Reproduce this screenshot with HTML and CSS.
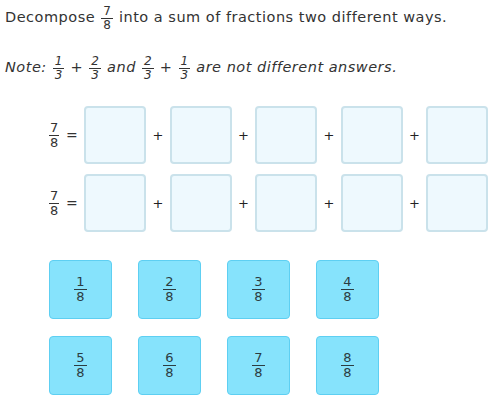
FILE: index.html
```html
<!DOCTYPE html>
<html>
<head>
<meta charset="utf-8">
<link rel="stylesheet" href="styles.css">
</head>
<body>
<div class="page">
  <p class="prompt">Decompose <span class="frac"><span class="num">7</span><span class="den">8</span></span> into a sum of fractions two different ways.</p>
  <p class="note"><em>Note: <span class="frac"><span class="num">1</span><span class="den">3</span></span> + <span class="frac"><span class="num">2</span><span class="den">3</span></span> and <span class="frac"><span class="num">2</span><span class="den">3</span></span> + <span class="frac"><span class="num">1</span><span class="den">3</span></span> are not different answers.</em></p>

  <div class="equations">
    <div class="eq-row">
      <span class="frac lhs"><span class="num">7</span><span class="den">8</span></span>
      <span class="eq">=</span>
      <div class="slot"></div><span class="plus">+</span>
      <div class="slot"></div><span class="plus">+</span>
      <div class="slot"></div><span class="plus">+</span>
      <div class="slot"></div><span class="plus">+</span>
      <div class="slot"></div>
    </div>
    <div class="eq-row">
      <span class="frac lhs"><span class="num">7</span><span class="den">8</span></span>
      <span class="eq">=</span>
      <div class="slot"></div><span class="plus">+</span>
      <div class="slot"></div><span class="plus">+</span>
      <div class="slot"></div><span class="plus">+</span>
      <div class="slot"></div><span class="plus">+</span>
      <div class="slot"></div>
    </div>
  </div>

  <div class="tiles">
    <div class="tile"><span class="frac"><span class="num">1</span><span class="den">8</span></span></div>
    <div class="tile"><span class="frac"><span class="num">2</span><span class="den">8</span></span></div>
    <div class="tile"><span class="frac"><span class="num">3</span><span class="den">8</span></span></div>
    <div class="tile"><span class="frac"><span class="num">4</span><span class="den">8</span></span></div>
    <div class="tile"><span class="frac"><span class="num">5</span><span class="den">8</span></span></div>
    <div class="tile"><span class="frac"><span class="num">6</span><span class="den">8</span></span></div>
    <div class="tile"><span class="frac"><span class="num">7</span><span class="den">8</span></span></div>
    <div class="tile"><span class="frac"><span class="num">8</span><span class="den">8</span></span></div>
  </div>
</div>
</body>
</html>
```

FILE: styles.css
```css
html, body {
  margin: 0;
  padding: 0;
  background: #fff;
}

.page {
  font-family: "DejaVu Sans", Verdana, sans-serif;
  color: #333;
  font-size: 14.5px;
  padding: 3px 0 0 5px;
}

.prompt, .note {
  margin: 0;
  line-height: 28px;
  white-space: nowrap;
  letter-spacing: 0.5px;
}

.note {
  margin-top: 22px;
}

.frac {
  display: inline-flex;
  flex-direction: column;
  align-items: center;
  vertical-align: middle;
  font-size: 12px;
  line-height: 11px;
  margin: 0 1px;
  letter-spacing: 0;
}

.frac .num {
  border-bottom: 1px solid #333;
  padding: 0 2px 1px;
}

.frac .den {
  padding-top: 1px;
}

.equations {
  margin-top: 25px;
  margin-left: 44px;
  display: flex;
  flex-direction: column;
  gap: 10px;
}

.eq-row {
  display: flex;
  align-items: center;
}

.lhs {
  font-size: 13px;
  line-height: 12px;
  margin: 0;
}

.lhs .num {
  padding: 0 1px 1px;
}

.eq {
  font-size: 14px;
  width: 25px;
  text-align: center;
}

.slot {
  width: 58px;
  height: 54px;
  background: #eef9fe;
  border: 2px solid #cae2eb;
  border-radius: 4px;
}

.plus {
  width: 23.5px;
  text-align: center;
  font-size: 13px;
  color: #222;
}

.tiles {
  margin-top: 28px;
  margin-left: 44px;
  display: grid;
  grid-template-columns: repeat(4, 63px);
  column-gap: 26px;
  row-gap: 17px;
}

.tile {
  height: 57px;
  background: #86e3fc;
  border: 1px solid #5ecff2;
  border-radius: 4px;
  display: flex;
  align-items: center;
  justify-content: center;
}

.tile .frac {
  font-size: 13px;
  line-height: 12px;
  color: #2b3c42;
}

.tile .frac .num {
  border-bottom-color: #2b3c42;
}
```
